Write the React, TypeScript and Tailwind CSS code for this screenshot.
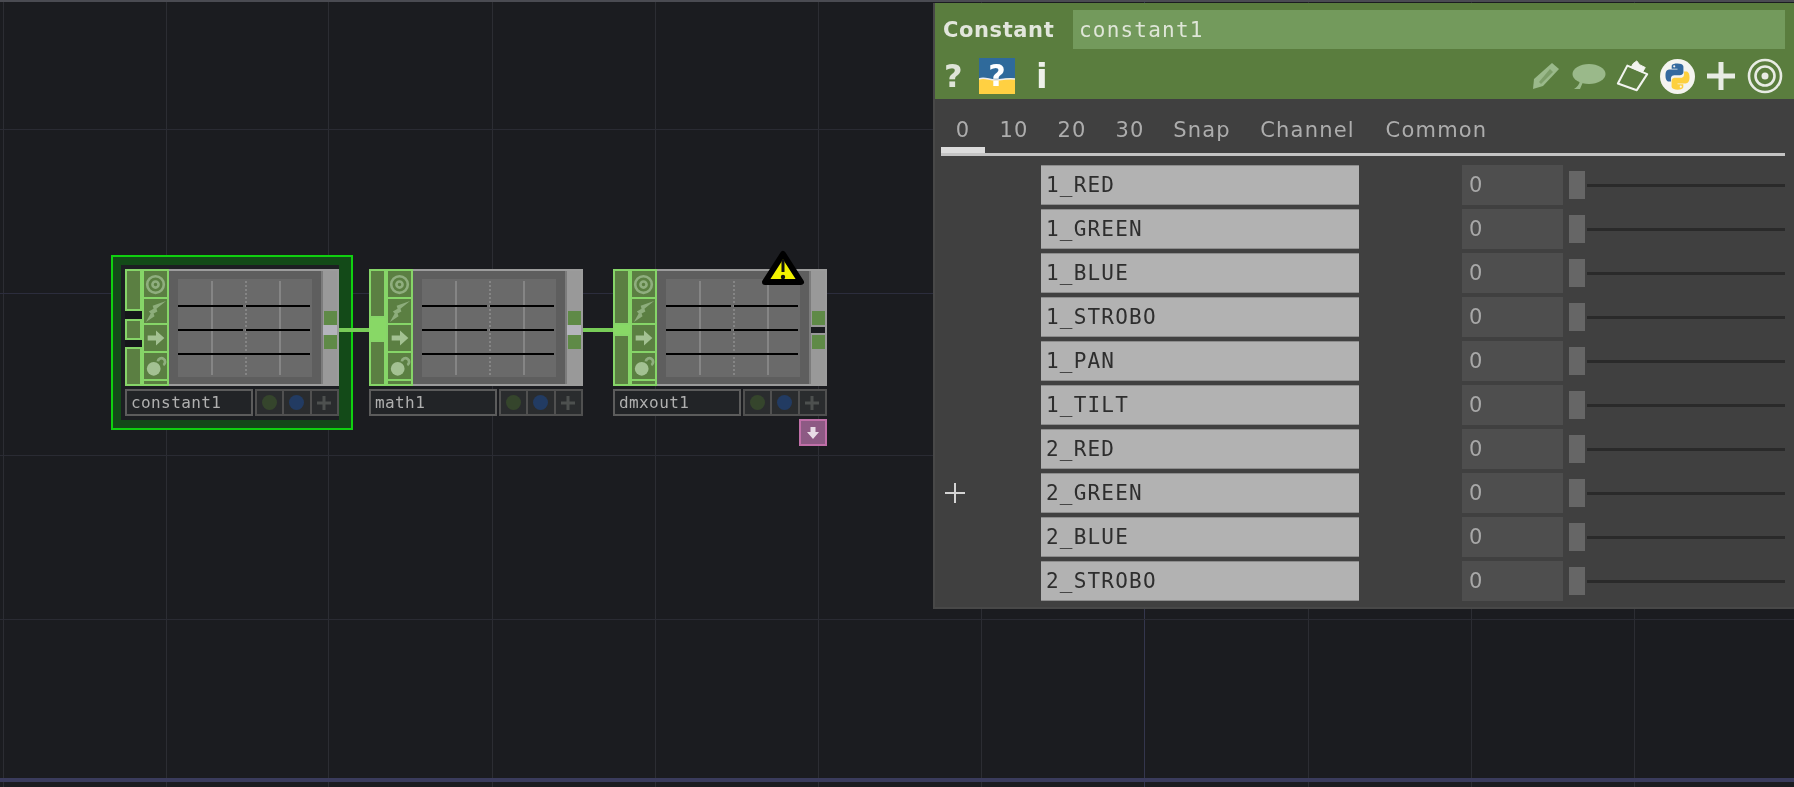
const gridX = [3, 166, 328, 492, 655, 818, 981, 1144, 1308, 1471, 1634];
const gridY = [129, 293, 455, 619];

const channels = [
  "1_RED",
  "1_GREEN",
  "1_BLUE",
  "1_STROBO",
  "1_PAN",
  "1_TILT",
  "2_RED",
  "2_GREEN",
  "2_BLUE",
  "2_STROBO",
];

const tabs = [
  { label: "0", width: "w-[44px]", active: true },
  { label: "10", width: "w-[58px]" },
  { label: "20", width: "w-[58px]" },
  { label: "30", width: "w-[58px]" },
  { label: "Snap", width: "w-[86px]" },
  { label: "Channel", width: "w-[125px]" },
  { label: "Common", width: "w-[133px]" },
];

type Block = { h: string; kind: "block" | "gap" | "input" };

const nodes: {
  name: string;
  x: number;
  y: number;
  inputs: Block[];
  notch?: boolean;
}[] = [
  {
    name: "constant1",
    x: 125,
    y: 269,
    inputs: [
      { h: "h-[42px]", kind: "block" },
      { h: "h-[8px]", kind: "gap" },
      { h: "h-[21px]", kind: "block" },
      { h: "h-[7px]", kind: "gap" },
      { h: "h-[39px]", kind: "block" },
    ],
  },
  {
    name: "math1",
    x: 369,
    y: 269,
    inputs: [
      { h: "h-[49px]", kind: "block" },
      { h: "h-[22px]", kind: "input" },
      { h: "h-[46px]", kind: "block" },
    ],
  },
  {
    name: "dmxout1",
    x: 613,
    y: 269,
    notch: true,
    inputs: [
      { h: "h-[56px]", kind: "block" },
      { h: "h-[9px]", kind: "input" },
      { h: "h-[52px]", kind: "block" },
    ],
  },
];

function TargetIcon() {
  return (
    <svg viewBox="0 0 24 24" className="h-[21px] w-[21px] blur-[0.6px]" fill="none" stroke="#8fae7e" strokeWidth="3">
      <circle cx="12" cy="12" r="9.500" />
      <circle cx="12" cy="12" r="3.500" />
    </svg>
  );
}

function BoltIcon() {
  return (
    <svg viewBox="0 0 24 24" className="h-[23px] w-[23px] blur-[0.6px]" fill="#8dad7b">
      <path d="M23 1 13 9l1 3-4 2 1 3-9 6 5-9-2-2 5-3-1-3z" />
    </svg>
  );
}

function ArrowIcon() {
  return (
    <svg viewBox="0 0 24 24" className="h-[20px] w-[20px] blur-[0.6px]" fill="#a3c192">
      <path d="M2 9h10V3l10 9-10 9v-6H2z" />
    </svg>
  );
}

function KnobIcon() {
  return (
    <svg viewBox="0 0 24 24" className="h-[22px] w-[22px] blur-[0.6px]" fill="none">
      <circle cx="9.500" cy="15" r="7.500" fill="#a3c192" />
      <path d="M14 7a4 4 0 1 1 6 4" stroke="#8fae7e" strokeWidth="3" />
    </svg>
  );
}

function IconCell({ h, children }: { h: string; children: React.ReactNode }) {
  return (
    <div className={`flex ${h} items-center justify-center border-b-2 border-[#86d568] bg-[#5b7f42]`}>
      {children}
    </div>
  );
}

function OpNode({ node }: { node: (typeof nodes)[number] }) {
  return (
    <div className="absolute w-[214px]" style={{ left: node.x, top: node.y }}>
      <div className="flex h-[117px] border-y-2 border-r-2 border-[#9c9c9c] bg-[#5e5e5e]">
        <div className="-my-[2px] flex w-[44px] shrink-0">
          <div className="flex w-[17px] flex-col">
            {node.inputs.map((block, i) =>
              block.kind === "gap" ? (
                <div key={i} className={`${block.h} bg-[#15161a]`} />
              ) : block.kind === "input" ? (
                <div key={i} className={`${block.h} bg-[#88d866]`} />
              ) : (
                <div key={i} className={`${block.h} border-2 border-[#86d568] bg-[#5b7f42]`} />
              )
            )}
          </div>
          <div className="flex w-[27px] flex-col border-x-2 border-t-2 border-[#86d568] bg-[#86d568]">
            <IconCell h="h-[28px]">
              <TargetIcon />
            </IconCell>
            <IconCell h="h-[26px]">
              <BoltIcon />
            </IconCell>
            <IconCell h="h-[28px]">
              <ArrowIcon />
            </IconCell>
            <IconCell h="h-[28px]">
              <KnobIcon />
            </IconCell>
            <div className="flex-1 border-b-2 border-[#86d568] bg-[#5b7f42]" />
          </div>
        </div>
        <div className="flex flex-1 items-center justify-center">
          <div className="relative h-[98px] w-[134px] bg-[#6a6a6a]">
            <div className="absolute inset-y-[2px] left-[33px] w-[2px] bg-[#858585]" />
            <div className="absolute inset-y-[2px] left-[67px] w-0 border-l-2 border-dotted border-[#858585]" />
            <div className="absolute inset-y-[2px] left-[101px] w-[2px] bg-[#858585]" />
            <div className="absolute left-0 top-[26px] flex w-[132px] justify-between">
              <div className="h-[2px] w-[65px] bg-black" />
              <div className="h-[2px] w-[64px] bg-black" />
            </div>
            <div className="absolute left-0 top-[50px] flex w-[132px] justify-between">
              <div className="h-[2px] w-[65px] bg-black" />
              <div className="h-[2px] w-[64px] bg-black" />
            </div>
            <div className="absolute left-0 top-[74px] h-[2px] w-[132px] bg-black" />
          </div>
        </div>
        <div className="flex w-[16px] shrink-0 flex-col items-center border-l-2 border-[#7c7c7c] bg-[#999999] pt-[40px]">
          <div className="h-[14px] w-[13px] bg-[#5f8a47]" />
          {node.notch ? (
            <div className="h-[10px] w-full border-y-2 border-[#999999] bg-[#1a1b1f]" />
          ) : (
            <div className="h-[10px] w-full bg-[#b4b4bc]" />
          )}
          <div className="h-[14px] w-[13px] bg-[#5f8a47]" />
        </div>
      </div>
      <div className="mt-[3px] flex h-[27px] gap-[2px]">
        <div className="flex w-[128px] items-center border-2 border-[#5c5c5c] bg-[#222427] pl-[4px] font-['DejaVu_Sans_Mono',monospace] text-[16px] tracking-[0.4px] text-[#b0b0b0]">
          {node.name}
        </div>
        <div className="flex flex-1 gap-[2px] border-2 border-[#505050] bg-[#505050]">
          <div className="flex flex-1 items-center justify-center bg-[#2a2c2e]">
            <div className="h-[15px] w-[15px] rounded-full bg-[#35452c] blur-[0.6px]" />
          </div>
          <div className="flex flex-1 items-center justify-center bg-[#2a2c2e]">
            <div className="h-[15px] w-[15px] rounded-full bg-[#223b62] blur-[0.6px]" />
          </div>
          <div className="flex flex-1 items-center justify-center bg-[#2a2c2e]">
            <svg viewBox="0 0 16 16" className="h-[16px] w-[16px] blur-[0.6px]" fill="#4d504f">
              <path d="M6.500 1h3v5.500H15v3H9.500V15h-3V9.500H1v-3h5.500z" />
            </svg>
          </div>
        </div>
      </div>
    </div>
  );
}

function PythonLogo() {
  return (
    <svg viewBox="0 0 32 32" className="h-[35px] w-[35px]">
      <circle cx="16" cy="16" r="16" fill="#f4f4f0" />
      <path
        fill="#33699f"
        d="M15.900 4c-5.500 0-5.200 2.400-5.200 2.400v2.500H16v.8H8.600S5 9.300 5 15s3.100 5.500 3.100 5.500H10v-2.600s-.1-3.100 3.100-3.100h5.300s3-.1 3-2.900V7s.4-3-5.500-3zM13 5.700a1 1 0 1 1 0 2 1 1 0 0 1 0-2z"
      />
      <path
        fill="#fdd03e"
        transform="rotate(180 16 16)"
        d="M15.900 4c-5.500 0-5.200 2.400-5.200 2.400v2.500H16v.8H8.600S5 9.300 5 15s3.100 5.500 3.100 5.500H10v-2.600s-.1-3.100 3.100-3.100h5.300s3-.1 3-2.900V7s.4-3-5.500-3zM13 5.700a1 1 0 1 1 0 2 1 1 0 0 1 0-2z"
      />
    </svg>
  );
}

function PanelHeader() {
  return (
    <div className="h-[96px] bg-[#5a7d3e]">
      <div className="flex h-[54px] items-center pb-[1px]">
        <div className="w-[138px] pl-[8px] pt-[3px] font-['DejaVu_Sans',sans-serif] text-[21px] font-bold tracking-[0.6px] text-[#e2e6dc]">
          Constant
        </div>
        <div className="flex h-[39px] w-[712px] items-center bg-[#739a5c] pl-[6px] pt-[3px] font-['DejaVu_Sans_Mono',monospace] text-[21px] tracking-[1.200px] text-[#dfe6d8]">
          constant1
        </div>
      </div>
      <div className="flex h-[38px] items-center pl-[9px] pr-[11px]">
        <div className="w-[35px] font-['DejaVu_Sans',sans-serif] text-[32px] font-bold leading-none text-[#dfe4d8]">?</div>
        <div className="relative flex h-[36px] w-[36px] items-center justify-center overflow-hidden bg-[#2f6a9b]">
          <svg viewBox="0 0 36 36" className="absolute inset-0 h-full w-full">
            <path d="M0 21c6-3 11 2 18 1s12-2 18-1v15H0z" fill="#ffd042" />
            <path d="M0 21c6-3 11 2 18 1s12-2 18-1" fill="none" stroke="#eee" strokeWidth="1.500" />
          </svg>
          <span className="relative font-['DejaVu_Sans',sans-serif] text-[30px] font-bold leading-none text-white">?</span>
        </div>
        <div className="ml-[21px] font-['DejaVu_Sans',sans-serif] text-[34px] font-bold leading-none text-[#eef1ea]">i</div>
        <div className="ml-auto flex items-center">
          <svg viewBox="0 0 28 28" className="h-[28px] w-[28px]" fill="#9ab98a">
            <path d="M20 1 27 7 11 24 1 27 2 17z" />
            <path d="M18 7 21 10 9 22 7 20z" fill="#7d9e69" />
          </svg>
          <svg viewBox="0 0 34 28" className="ml-[12px] h-[28px] w-[34px]" fill="#9ab98a">
            <ellipse cx="17" cy="12" rx="16.500" ry="10" />
            <path d="M8 19 L11 20 L8 27 L2 27 C5 25 7 23 8 19z" />
          </svg>
          <svg viewBox="0 0 36 34" className="ml-[10px] h-[34px] w-[34px]" fill="none" stroke="#f2f4ef" strokeWidth="2.200">
            <path d="M12 6 33 15 22 32 2 25z" strokeLinejoin="round" />
            <path d="M18 4 22 1 25 5 31 8 28 13 16 8z" fill="#f2f4ef" strokeWidth="1" />
          </svg>
          <div className="ml-[10px]">
            <PythonLogo />
          </div>
          <svg viewBox="0 0 28 28" className="ml-[12px] h-[28px] w-[28px]" fill="#e8ece4">
            <path d="M11.500 0h5v11.500H28v5H16.500V28h-5V16.500H0v-5h11.500z" />
          </svg>
          <svg viewBox="0 0 36 36" className="ml-[12px] h-[36px] w-[36px]" fill="none" stroke="#e8ece4" strokeWidth="2.600">
            <circle cx="18" cy="18" r="16" />
            <circle cx="18" cy="18" r="9.500" />
            <circle cx="18" cy="18" r="3.500" fill="#e8ece4" stroke="none" />
          </svg>
        </div>
      </div>
    </div>
  );
}

function Panel() {
  return (
    <div className="absolute left-[933px] top-[3px] h-[606px] w-[861px] border-b-2 border-l-2 border-[#484848] bg-[#404040] font-['DejaVu_Sans',sans-serif]">
      <PanelHeader />
      <div className="ml-[6px] mr-[9px] flex h-[57px] border-b-[3px] border-[#c4c4c4]">
        {tabs.map((tab) => (
          <div
            key={tab.label}
            className={`${tab.width} relative flex items-center justify-center pt-[9px] text-[21px] tracking-[1.200px] text-[#adadad]`}
          >
            {tab.label}
            {tab.active && <div className="absolute inset-x-0 bottom-0 h-[6px] bg-[#dcdcdc]" />}
          </div>
        ))}
      </div>
      <div className="flex flex-col gap-[4px] pt-[9px]">
        {channels.map((name) => (
          <div key={name} className="flex h-[40px] items-stretch">
            <div className="flex w-[106px] shrink-0 items-center pl-[10px]">
              {name === "2_GREEN" && (
                <svg viewBox="0 0 20 20" className="h-[20px] w-[20px]" stroke="#d4d4d4" strokeWidth="2">
                  <path d="M0 10h20M10 0v20" />
                </svg>
              )}
            </div>
            <div className="flex w-[318px] items-center border-y border-[#8c8c8c] bg-[#b2b2b2] pl-[5px] pt-[2px] font-['DejaVu_Sans_Mono',monospace] text-[21px] tracking-[1.200px] text-[#2e2e2e]">
              {name}
            </div>
            <div className="ml-[103px] flex w-[101px] items-center bg-[#4e4e4e] pl-[7px] pt-[2px] text-[21px] text-[#a8a8a8]">
              0
            </div>
            <div className="ml-[6px] flex flex-1 items-center pr-[9px]">
              <div className="h-[28px] w-[16px] bg-[#666666]" />
              <div className="ml-[2px] h-[3px] flex-1 bg-[#2a2a2a]" />
            </div>
          </div>
        ))}
      </div>
    </div>
  );
}

export default function App() {
  return (
    <div className="relative h-[787px] w-[1794px] overflow-hidden bg-[#1b1c20] blur-[0.6px]">
      {gridX.map((x) => (
        <div
          key={x}
          className={`absolute inset-y-0 w-[1px] ${x === 1144 ? "bg-[#34364d]" : "bg-[#2c2d33]"}`}
          style={{ left: x }}
        />
      ))}
      {gridY.map((y) => (
        <div
          key={y}
          className={`absolute inset-x-0 h-[1px] ${y === 293 ? "bg-[#2c2d3d]" : "bg-[#2a2b33]"}`}
          style={{ top: y }}
        />
      ))}
      <div className="absolute inset-x-0 top-0 h-[2px] bg-[#4a4b52]" />
      <div className="absolute inset-x-0 top-[778px] h-[4px] bg-[#3a3b5c]" />

      <div className="absolute left-[111px] top-[255px] h-[175px] w-[242px] border-2 border-[#10d010] bg-[#134a18] p-[8px]">
        <div className="h-[155px] w-[218px] bg-[#1c1e22]" />
      </div>

      <div className="absolute left-[339px] top-[328px] h-[4px] w-[31px] bg-[#78cc58]" />
      <div className="absolute left-[583px] top-[328px] h-[4px] w-[31px] bg-[#78cc58]" />

      {nodes.map((node) => (
        <OpNode key={node.name} node={node} />
      ))}

      <svg viewBox="0 0 44 38" className="absolute left-[761px] top-[249px] h-[38px] w-[44px]">
        <path d="M22 5 40 33H4z" fill="#f2f200" stroke="#000" strokeWidth="6" strokeLinejoin="round" />
        <rect x="20.500" y="11" width="3" height="12" fill="#111" />
        <circle cx="22" cy="28" r="2.200" fill="#111" />
      </svg>

      <div className="absolute left-[799px] top-[419px] flex h-[27px] w-[28px] items-center justify-center border-2 border-[#c06fa8] bg-[#8d5a84]">
        <svg viewBox="0 0 14 14" className="h-[14px] w-[14px]" fill="#e8dce6">
          <path d="M4.500 1h5v5H13l-6 7-6-7h3.500z" />
        </svg>
      </div>

      <Panel />
    </div>
  );
}
